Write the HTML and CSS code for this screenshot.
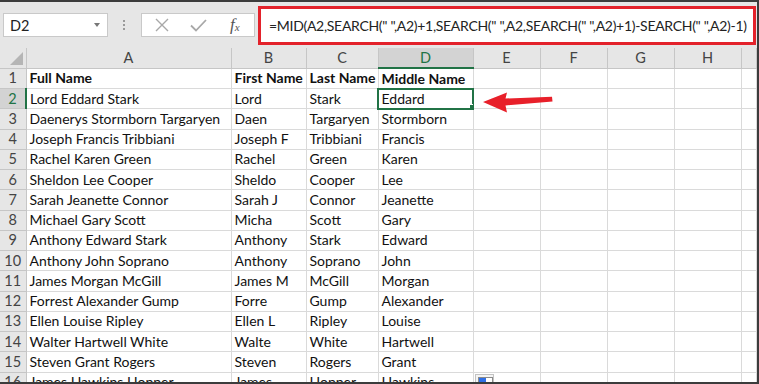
FILE: index.html
```html
<!DOCTYPE html>
<html lang="en">
<head>
    <meta charset="UTF-8">
    <meta name="viewport" content="width=device-width, initial-scale=1.0">
    <title>Middle Name - Excel</title>
    <link rel="stylesheet" href="styles.css">
</head>
<body>
  <div class="app">
    <div class="toolbar">
      <div class="namebox"><span>D2</span><span class="caret"></span></div>
      <div class="grip"><i></i><i></i><i></i></div>
      <div class="fxbox">
        <svg width="14" height="14" viewBox="0 0 14 14"><path d="M1 1L13 13M13 1L1 13" stroke="#a8a8a8" stroke-width="1.4" fill="none"/></svg>
        <svg width="17" height="13" viewBox="0 0 17 13"><path d="M1 6.5L6 11.5L16 1" stroke="#a8a8a8" stroke-width="1.8" fill="none"/></svg>
        <span class="fx">f<sub>x</sub></span>
      </div>
      <div class="formula">=MID(A2,SEARCH(" ",A2)+1,SEARCH(" ",A2,SEARCH(" ",A2)+1)-SEARCH(" ",A2)-1)</div>
    </div>

    <table class="sheet">
      <colgroup>
        <col style="width:26px"><col style="width:205px"><col style="width:75px"><col style="width:72px"><col style="width:95px">
        <col style="width:67px"><col style="width:67px"><col style="width:67px"><col style="width:67px"><col>
      </colgroup>
      <tr class="heads">
        <th class="corner"><span class="tri"></span></th><th>A</th><th>B</th><th>C</th><th class="sel">D</th><th>E</th><th>F</th><th>G</th><th>H</th><th></th>
      </tr>
      <tr class="bold"><th>1</th><td>Full Name</td><td>First Name</td><td>Last Name</td><td>Middle Name</td><td></td><td></td><td></td><td></td><td></td></tr>
      <tr><th class="sel">2</th><td>Lord Eddard Stark</td><td>Lord</td><td>Stark</td><td class="active">Eddard</td><td></td><td></td><td></td><td></td><td></td></tr>
      <tr><th>3</th><td>Daenerys Stormborn Targaryen</td><td>Daen</td><td>Targaryen</td><td>Stormborn</td><td></td><td></td><td></td><td></td><td></td></tr>
      <tr><th>4</th><td>Joseph Francis Tribbiani</td><td>Joseph F</td><td>Tribbiani</td><td>Francis</td><td></td><td></td><td></td><td></td><td></td></tr>
      <tr><th>5</th><td>Rachel Karen Green</td><td>Rachel</td><td>Green</td><td>Karen</td><td></td><td></td><td></td><td></td><td></td></tr>
      <tr><th>6</th><td>Sheldon Lee Cooper</td><td>Sheldo</td><td>Cooper</td><td>Lee</td><td></td><td></td><td></td><td></td><td></td></tr>
      <tr><th>7</th><td>Sarah Jeanette Connor</td><td>Sarah J</td><td>Connor</td><td>Jeanette</td><td></td><td></td><td></td><td></td><td></td></tr>
      <tr><th>8</th><td>Michael Gary Scott</td><td>Micha</td><td>Scott</td><td>Gary</td><td></td><td></td><td></td><td></td><td></td></tr>
      <tr><th>9</th><td>Anthony Edward Stark</td><td>Anthony</td><td>Stark</td><td>Edward</td><td></td><td></td><td></td><td></td><td></td></tr>
      <tr><th>10</th><td>Anthony John Soprano</td><td>Anthony</td><td>Soprano</td><td>John</td><td></td><td></td><td></td><td></td><td></td></tr>
      <tr><th>11</th><td>James Morgan McGill</td><td>James M</td><td>McGill</td><td>Morgan</td><td></td><td></td><td></td><td></td><td></td></tr>
      <tr><th>12</th><td>Forrest Alexander Gump</td><td>Forre</td><td>Gump</td><td>Alexander</td><td></td><td></td><td></td><td></td><td></td></tr>
      <tr><th>13</th><td>Ellen Louise Ripley</td><td>Ellen L</td><td>Ripley</td><td>Louise</td><td></td><td></td><td></td><td></td><td></td></tr>
      <tr><th>14</th><td>Walter Hartwell White</td><td>Walte</td><td>White</td><td>Hartwell</td><td></td><td></td><td></td><td></td><td></td></tr>
      <tr><th>15</th><td>Steven Grant Rogers</td><td>Steven</td><td>Rogers</td><td>Grant</td><td></td><td></td><td></td><td></td><td></td></tr>
      <tr><th>16</th><td>James Hawkins Hopper</td><td>James</td><td>Hopper</td><td>Hawkins</td><td></td><td></td><td></td><td></td><td></td></tr>
    </table>

    <svg class="arrow" width="74" height="25" viewBox="0 0 74 25">
      <polygon points="2,12 26,2.5 24.5,8.5 71,6.8 71.5,11.5 24.5,15.5 26,22.5" fill="#e8202a"/>
    </svg>
    <div class="paste"><span></span></div>
  </div>
</body>
</html>
```

FILE: styles.css
```css
body {
    margin: 0;
    font-family: Lato, "Open Sans", sans-serif;
    background-color: #fff;
}
.app {
    position: relative;
    box-sizing: border-box;
    width: 759px;
    height: 384px;
    overflow: hidden;
    border-top: 2px solid #3c3c3c;
    border-right: 2px solid #3c3c3c;
    border-bottom: 2px solid #3c3c3c;
}
.toolbar {
    display: flex;
    align-items: center;
    height: 46px;
    padding: 0 1px 0 3px;
    background-color: #e6e6e6;
}
.namebox {
    flex-shrink: 0;
    display: flex;
    align-items: center;
    justify-content: space-between;
    box-sizing: border-box;
    width: 105px;
    height: 24px;
    padding: 0 7px 0 6px;
    background-color: #fff;
    border: 1px solid #c9c9c9;
    font-size: 14.5px;
    color: #222;
}
.caret {
    width: 0;
    height: 0;
    border-left: 3.5px solid transparent;
    border-right: 3.5px solid transparent;
    border-top: 4px solid #777;
}
.grip {
    flex-shrink: 0;
    display: flex;
    flex-direction: column;
    gap: 2px;
    margin: 0 16px 0 15px;
}
.grip i {
    width: 2px;
    height: 2px;
    background-color: #9a9a9a;
}
.fxbox {
    flex-shrink: 0;
    display: flex;
    align-items: center;
    box-sizing: border-box;
    width: 114px;
    height: 24px;
    padding-left: 13px;
    background-color: #fff;
    border: 1px solid #c9c9c9;
}
.fxbox svg + svg {
    margin-left: 21px;
}
.fx {
    margin-left: 23px;
    font-family: "Liberation Serif", serif;
    font-style: italic;
    font-size: 17px;
    color: #555;
}
.fx sub {
    font-size: 11px;
    vertical-align: -1px;
}
.formula {
    flex: 1;
    min-width: 0;
    display: flex;
    align-items: center;
    box-sizing: border-box;
    height: 39px;
    margin-left: 3px;
    padding-left: 8px;
    background-color: #fff;
    border: 3px solid #e3222b;
    font-size: 14px;
    letter-spacing: -0.3px;
    color: #222;
    white-space: nowrap;
}
.sheet {
    width: 757px;
    table-layout: fixed;
    border-collapse: collapse;
    font-size: 14px;
    color: #111;
}
.sheet tr {
    height: 20.25px;
}
.sheet td {
    padding: 0 3px;
    border: 1px solid #dadada;
    white-space: nowrap;
    overflow: hidden;
    line-height: 18px;
}
.sheet th {
    padding: 0;
    font-weight: normal;
    font-size: 14.5px;
    color: #444;
    background-color: #e6e6e6;
    border: 1px solid #c6c6c6;
    border-left: none;
    line-height: 18px;
}
.heads {
    height: 20px;
}
.heads th {
    border-top: none;
}
.sheet th.sel {
    background-color: #d3d3d3;
    color: #217346;
}
.heads th.sel {
    border-bottom: 2px solid #217346;
}
tr th.sel:first-child {
    border-right: 2px solid #217346;
}
.corner {
    position: relative;
}
.tri {
    position: absolute;
    right: 3px;
    bottom: 3px;
    width: 0;
    height: 0;
    border-left: 13px solid transparent;
    border-bottom: 13px solid #b5b5b5;
}
.bold td {
    font-weight: bold;
}
.sheet td.active {
    position: relative;
    outline: 2px solid #217346;
    outline-offset: -1px;
}
.active::after {
    content: "";
    position: absolute;
    right: -3px;
    bottom: -3px;
    width: 5px;
    height: 5px;
    background-color: #217346;
    border: 1px solid #fff;
}
.arrow {
    position: absolute;
    left: 481px;
    top: 88px;
}
.paste {
    position: absolute;
    left: 475px;
    top: 372px;
    box-sizing: border-box;
    width: 19px;
    height: 14px;
    background-color: #f4f4f4;
    border: 1px solid #c3c3c3;
}
.paste span {
    position: absolute;
    left: 2px;
    top: 2px;
    width: 13px;
    height: 4px;
    border: 1px solid #8a8a8a;
    background: linear-gradient(to right, #2f6fe6 50%, #fff 50%);
}
```
